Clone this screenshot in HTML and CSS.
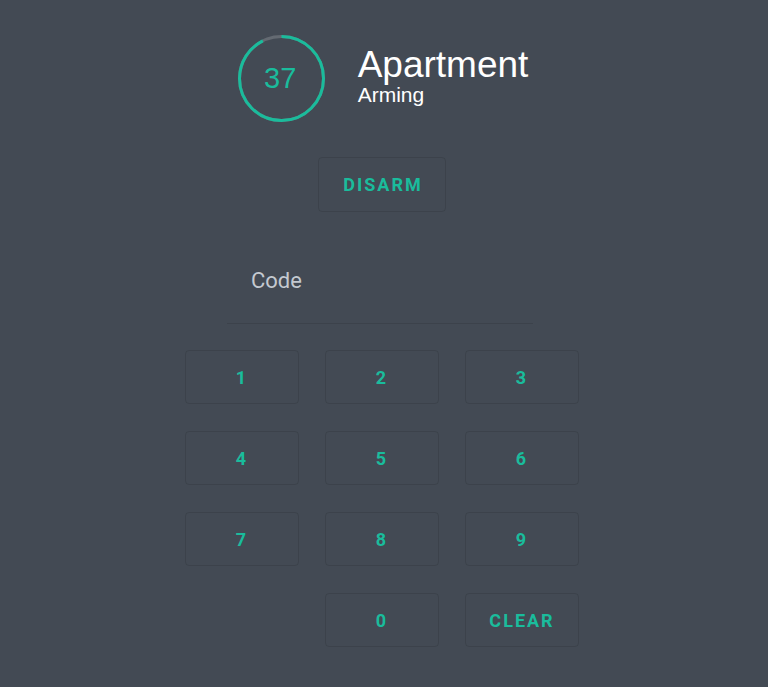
FILE: index.html
```html
<!DOCTYPE html>
<html lang="en">
<head>
    <meta charset="UTF-8">
    <meta name="viewport" content="width=device-width, initial-scale=1.0">
    <title>Alarm panel</title>
    <link rel="stylesheet" href="styles.css">
</head>
<body>
    <div class="panel">
        <div class="header">
            <div class="timer">
                <svg width="87" height="87" viewBox="0 0 87 87">
                    <circle class="timer-track" cx="43.5" cy="43.5" r="42"></circle>
                    <circle class="timer-bar" cx="43.5" cy="43.5" r="42"
                            stroke-dasharray="244.1 263.9"
                            transform="rotate(-90 43.5 43.5)"></circle>
                </svg>
                <span class="timer-value">37</span>
            </div>
            <div class="title">
                <div class="title-name">Apartment</div>
                <div class="title-state">Arming</div>
            </div>
        </div>

        <div class="actions">
            <button class="btn btn-action">DISARM</button>
        </div>

        <div class="code-field">
            <label class="code-label">Code</label>
        </div>

        <div class="keypad">
            <button class="btn key">1</button>
            <button class="btn key">2</button>
            <button class="btn key">3</button>
            <button class="btn key">4</button>
            <button class="btn key">5</button>
            <button class="btn key">6</button>
            <button class="btn key">7</button>
            <button class="btn key">8</button>
            <button class="btn key">9</button>
            <span></span>
            <button class="btn key">0</button>
            <button class="btn key">CLEAR</button>
        </div>
    </div>
</body>
</html>
```

FILE: styles.css
```css
* {
    margin: 0;
    padding: 0;
    box-sizing: border-box;
}

body {
    background: #434a54;
    font-family: Roboto, "Liberation Sans", sans-serif;
    min-height: 100vh;
    padding: 35px 4px 0 0;
}

.panel {
    display: flex;
    flex-direction: column;
    align-items: center;
}

.header {
    display: flex;
    align-items: center;
    gap: 33px;
    height: 87px;
    margin-left: 2px;
}

.timer {
    position: relative;
    width: 87px;
    height: 87px;
}

.timer svg {
    display: block;
}

.timer-track,
.timer-bar {
    fill: none;
    stroke-width: 3;
}

.timer-track {
    stroke: #646a72;
}

.timer-bar {
    stroke: #1abc9c;
}

.timer-value {
    position: absolute;
    inset: 0;
    display: flex;
    align-items: center;
    justify-content: center;
    font-family: "Liberation Sans", Arial, sans-serif;
    font-size: 29px;
    color: #1abc9c;
    padding-right: 2px;
}

.title {
    font-family: "Liberation Sans", Arial, sans-serif;
    color: #ffffff;
    margin-top: -6px;
}

.title-name {
    font-size: 37px;
    line-height: 38px;
}

.title-state {
    font-size: 21px;
    line-height: 22px;
    margin-top: 0;
}

.btn {
    background: transparent;
    border: 1px solid rgba(0, 0, 0, 0.1);
    border-radius: 4px;
    color: #1abc9c;
    font-family: Roboto, sans-serif;
    font-weight: 700;
    font-size: 18px;
    letter-spacing: 2px;
    cursor: pointer;
}

.actions {
    margin-top: 35px;
}

.btn-action {
    width: 128px;
    height: 55px;
    padding-left: 2px;
}

.code-field {
    margin-top: 34px;
    width: 306px;
    padding: 20px 0 27px 24px;
    border-bottom: 1px solid rgba(0, 0, 0, 0.1);
    margin-right: 4px;
}

.code-label {
    display: block;
    font-size: 22px;
    line-height: 30px;
    color: #c4c9d0;
}

.keypad {
    margin-top: 26px;
    display: grid;
    grid-template-columns: repeat(3, 114px);
    grid-auto-rows: 54px;
    gap: 27px 26px;
}

.key {
    width: 100%;
    height: 100%;
}
```
